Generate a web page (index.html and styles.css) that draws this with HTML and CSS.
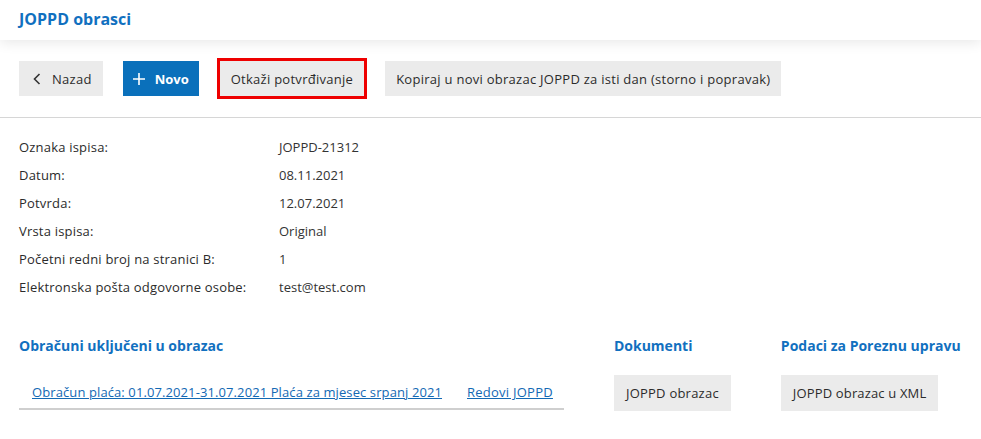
FILE: index.html
```html
<!DOCTYPE html>
<html lang="hr">
<head>
<meta charset="utf-8">
<title>JOPPD obrasci</title>
<link rel="stylesheet" href="styles.css">
</head>
<body>
<header class="topbar">
  <h1 class="title">JOPPD obrasci</h1>
</header>
<div class="toolbar">
  <button class="btn btn-back"><svg class="ico" width="8" height="12" viewBox="0 0 8 12"><path d="M6.5 1 L1.5 6 L6.5 11" fill="none" stroke="#333" stroke-width="1.6"/></svg>Nazad</button>
  <button class="btn btn-primary"><svg class="ico" width="12" height="12" viewBox="0 0 12 12"><path d="M6 0 V12 M0 6 H12" stroke="#fff" stroke-width="1.6"/></svg>Novo</button>
  <button class="btn btn-marked">Otkaži potvrđivanje</button>
  <button class="btn btn-copy">Kopiraj u novi obrazac JOPPD za isti dan (storno i popravak)</button>
</div>
<section class="details">
  <div class="label">Oznaka ispisa:</div><div class="value">JOPPD-21312</div>
  <div class="label">Datum:</div><div class="value">08.11.2021</div>
  <div class="label">Potvrda:</div><div class="value">12.07.2021</div>
  <div class="label">Vrsta ispisa:</div><div class="value">Original</div>
  <div class="label">Početni redni broj na stranici B:</div><div class="value">1</div>
  <div class="label">Elektronska pošta odgovorne osobe:</div><div class="value">test@test.com</div>
</section>
<section class="lower">
  <div class="col col-main">
    <h2 class="heading">Obračuni uključeni u obrazac</h2>
    <div class="link-row">
      <a href="#" class="link">Obračun plaća: 01.07.2021-31.07.2021 Plaća za mjesec srpanj 2021</a>
      <a href="#" class="link link-rows">Redovi JOPPD</a>
    </div>
  </div>
  <div class="col">
    <h2 class="heading">Dokumenti</h2>
    <button class="btn btn-doc">JOPPD obrazac</button>
  </div>
  <div class="col">
    <h2 class="heading">Podaci za Poreznu upravu</h2>
    <button class="btn btn-doc btn-xml">JOPPD obrazac u XML</button>
  </div>
</section>
</body>
</html>
```
FILE: styles.css
```css
* { box-sizing: border-box; }
body {
  margin: 0;
  background: #fff;
  font-family: "Open Sans", "Noto Sans", sans-serif;
  font-size: 13px;
  color: #333;
}
.topbar {
  height: 40px;
  padding: 0 19px;
  display: flex;
  align-items: center;
  background: #fff;
  box-shadow: 0 3px 12px rgba(0,0,0,0.09);
  position: relative;
}
.title {
  margin: 0;
  font-size: 16px;
  font-weight: 700;
  color: #1170bf;
  line-height: 1;
  padding-bottom: 2px;
}
.toolbar {
  display: flex;
  align-items: center;
  gap: 20px;
  padding: 21px 19px 21px;
  border-bottom: 1px solid #d6d6d6;
}
.btn {
  height: 35px;
  padding: 0 11px;
  border: none;
  background: #ebebeb;
  color: #2b2b2b;
  font-family: inherit;
  font-size: 13px;
  font-weight: 400;
  letter-spacing: 0.27px;
  display: inline-flex;
  align-items: center;
  cursor: pointer;
}
.btn-back { padding: 0 11px 0 14px; }
.btn-back .ico { margin-right: 11px; }
.btn-primary {
  background: #0a70bb;
  color: #fff;
  font-weight: 700;
  letter-spacing: 0;
  padding: 0 10px 0 10px;
}
.btn-primary .ico { margin-right: 10px; }
.btn-marked {
  outline: 3px solid #ee0000;
  outline-offset: 0;
  margin-left: 1px;
}
.btn-copy { margin-left: 1px; }
.btn-doc { height: 36px; padding: 0 12px; letter-spacing: 0.23px; }
.btn-xml { letter-spacing: 0.15px; }
.details {
  display: grid;
  grid-template-columns: 260px auto;
  grid-auto-rows: 28px;
  align-items: center;
  padding: 15px 19px 0;
}
.label { line-height: 28px; letter-spacing: 0.2px; color: #2b2b2b; }
.value { line-height: 28px; }
.lower {
  display: flex;
  gap: 50px;
  padding: 35px 19px 0;
}
.col { display: flex; flex-direction: column; align-items: flex-start; }
.heading {
  margin: 0 0 19px;
  font-size: 14px;
  font-weight: 700;
  color: #1170bf;
  line-height: 20px;
}
.link-row {
  display: flex;
  gap: 25px;
  height: 35px;
  align-items: center;
  padding: 1px 11px 0 13px;
  border-bottom: 2px solid #cfcfcf;
}
.link {
  color: #1369b4;
  text-decoration: underline;
  letter-spacing: 0.1px;
}
.link-rows { letter-spacing: 0.25px; }
```
